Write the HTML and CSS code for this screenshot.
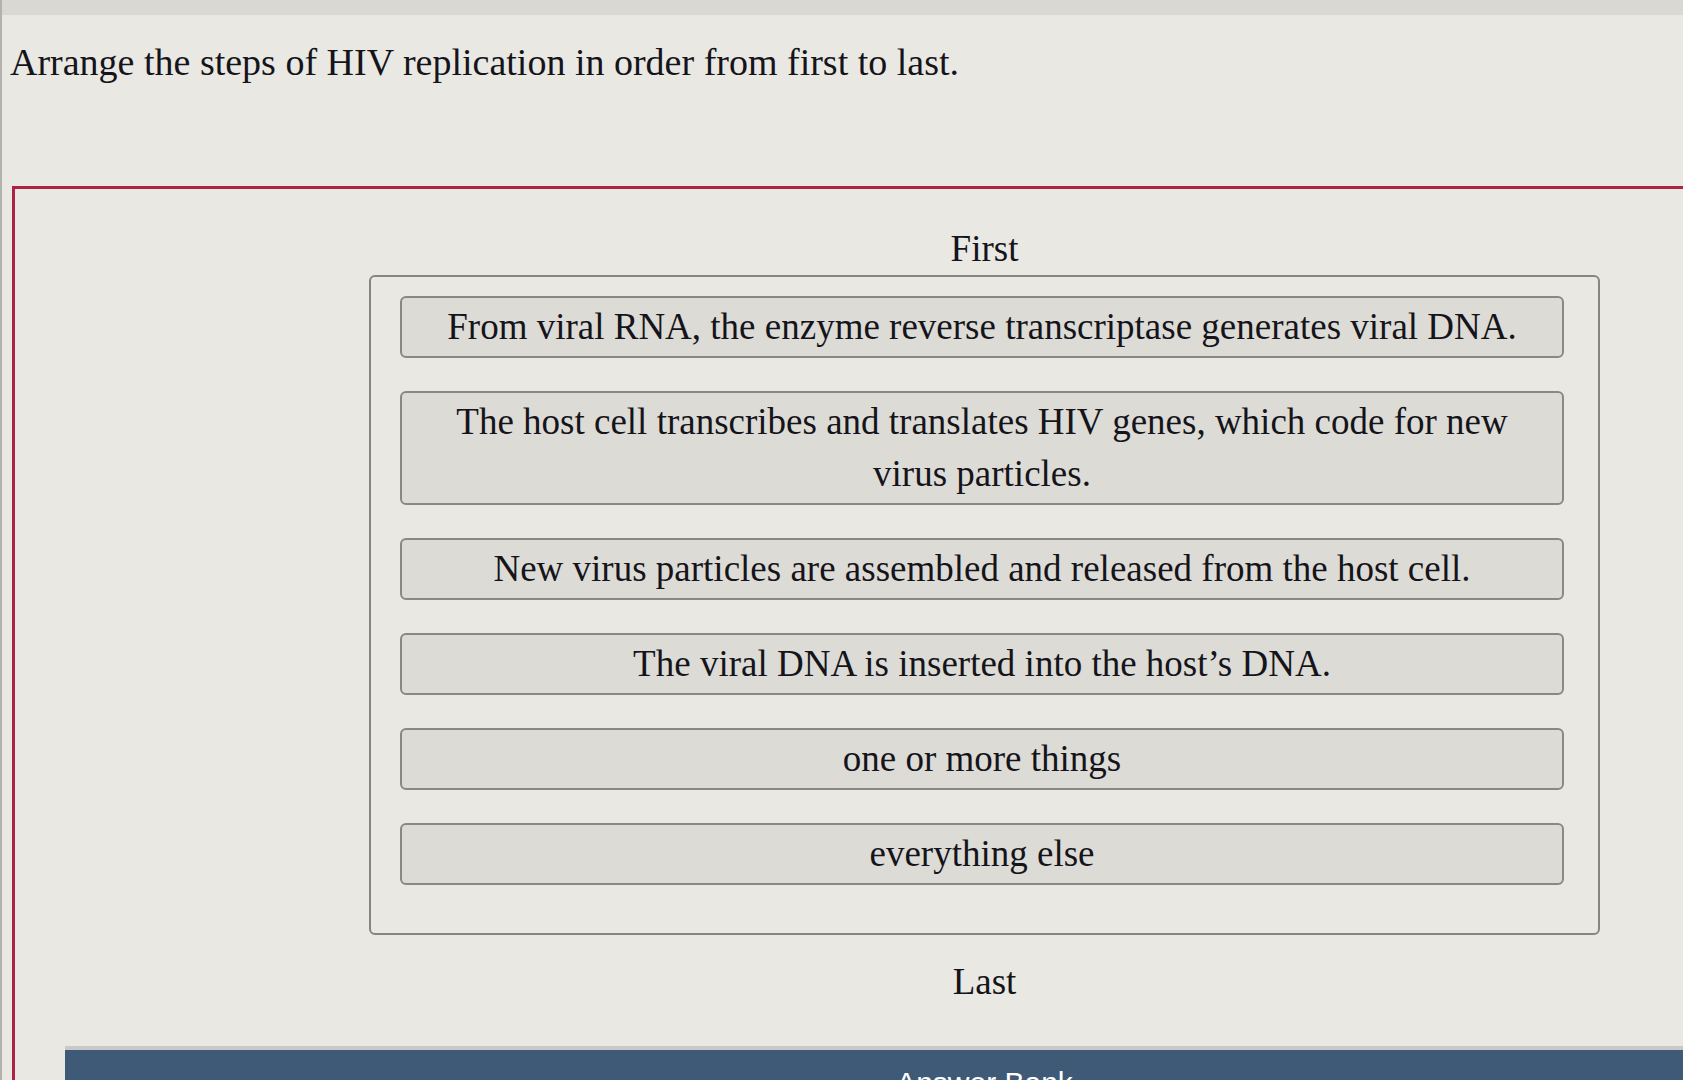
FILE: index.html
```html
<!DOCTYPE html>
<html lang="en">
<head>
<meta charset="utf-8">
<title>HIV replication ordering</title>
<link rel="stylesheet" href="styles.css">
</head>
<body>
<div class="page">
  <div class="topstrip"></div>
  <h1 class="prompt">Arrange the steps of HIV replication in order from first to last.</h1>
  <section class="frame">
    <div class="column">
      <div class="label">First</div>
      <ol class="slots">
        <li class="item">From viral RNA, the enzyme reverse transcriptase generates viral DNA.</li>
        <li class="item">The host cell transcribes and translates HIV genes, which code for new virus particles.</li>
        <li class="item">New virus particles are assembled and released from the host cell.</li>
        <li class="item">The viral DNA is inserted into the host’s DNA.</li>
        <li class="item">one or more things</li>
        <li class="item">everything else</li>
      </ol>
      <div class="label last">Last</div>
    </div>
    <div class="bank">
      <div class="bank-title">Answer Bank</div>
    </div>
  </section>
</div>
</body>
</html>
```

FILE: styles.css
```css
html, body {
  margin: 0;
  height: 100%;
  overflow: hidden;
}

body {
  background: #e9e8e3;
  font-family: "Liberation Serif", "Times New Roman", serif;
  color: #15141a;
}

.page {
  height: 1080px;
  box-sizing: border-box;
  border-left: 2px solid #b3b2ad;
  display: flex;
  flex-direction: column;
}

.topstrip {
  height: 15px;
  flex: none;
  background: #d9d8d3;
}

.prompt {
  margin: 21px 0 0 8px;
  font-weight: normal;
  font-size: 38px;
  line-height: 52px;
}

.frame {
  flex: 1;
  margin: 98px 0 0 10px;
  padding-top: 34px;
  border-top: 3px solid #ad2346;
  border-left: 3px solid #ad2346;
  min-height: 0;
}

.column {
  margin-left: 354px;
  width: 1231px;
}

.label {
  text-align: center;
  font-size: 37px;
  line-height: 52px;
}

.label.last {
  margin-top: 21px;
}

.slots {
  list-style: none;
  margin: 0;
  padding: 19px 34px 48px 29px;
  border: 2px solid #858583;
  border-radius: 6px;
  display: flex;
  flex-direction: column;
  gap: 33px;
}

.item {
  background: #dcdbd6;
  border: 2px solid #888885;
  border-radius: 6px;
  padding: 3px 16px;
  text-align: center;
  font-size: 37px;
  line-height: 52px;
}

.bank {
  margin: 38px 0 0 50px;
  height: 200px;
  border-top: 4px solid #c9c9c7;
  background: #3e5a77;
}

.bank-title {
  margin-left: 304px;
  width: 1231px;
  padding-top: 15px;
  text-align: center;
  color: #ffffff;
  font-family: "Liberation Sans", Arial, sans-serif;
  font-size: 30px;
  line-height: 36px;
}
```
